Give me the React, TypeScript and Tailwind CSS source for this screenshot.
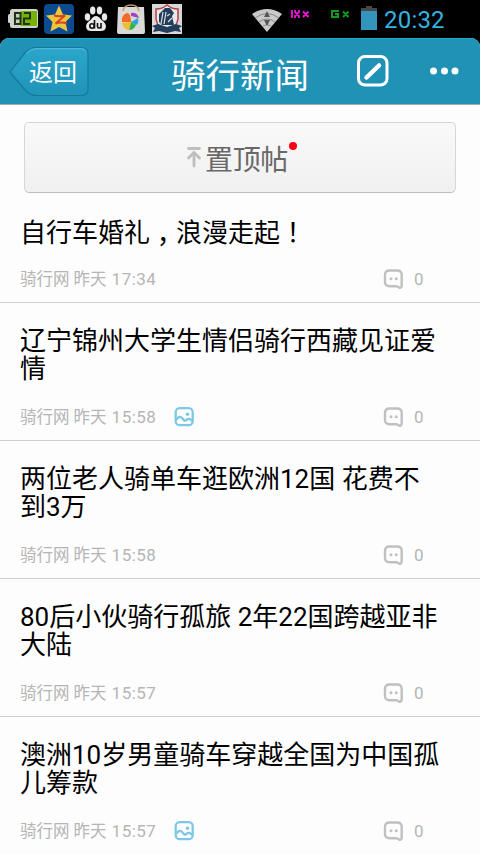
type Post = {
  title: string[];
  time: string;
  hasImage?: boolean;
  replies: number;
};

const posts: Post[] = [
  { title: ["自行车婚礼，浪漫走起！"], time: "17:34", replies: 0 },
  {
    title: ["辽宁锦州大学生情侣骑行西藏见证爱", "情"],
    time: "15:58",
    hasImage: true,
    replies: 0,
  },
  {
    title: ["两位老人骑单车逛欧洲12国 花费不", "到3万"],
    time: "15:58",
    replies: 0,
  },
  {
    title: ["80后小伙骑行孤旅 2年22国跨越亚非", "大陆"],
    time: "15:57",
    replies: 0,
  },
  {
    title: ["澳洲10岁男童骑车穿越全国为中国孤", "儿筹款"],
    time: "15:57",
    hasImage: true,
    replies: 0,
  },
];

/* ---------------- PAGE ---------------- */

export default function App() {
  return (
    <div className="h-[854px] w-[480px] overflow-hidden bg-black font-['Roboto','Noto_Sans_CJK_SC',sans-serif]">
      <StatusBar />
      <div className="flex h-[816px] flex-col overflow-hidden rounded-t-[9px] bg-[#fdfdfd]">
        <Header />

        <main className="flex flex-col">
          <div className="px-6 pt-[17px]">
            <button className="flex h-[71px] w-full items-center justify-center rounded-[5px] border border-[#d6d6d6] border-b-[#bdbdbd] bg-gradient-to-b from-[#f9f9f9] to-[#f0f0f0] pr-[6px]">
              <TopIcon />
              <span className="mt-[6px] ml-[3px] text-[28px] leading-8 tracking-[-0.3px] text-[#686868]">
                <span className="relative">
                  置顶帖
                  <span className="absolute -top-[2px] right-[-9px] size-2 rounded-full bg-[#fb0010]" />
                </span>
              </span>
            </button>
          </div>

          {posts.map((post, idx) => (
            <PostRow key={idx} post={post} />
          ))}
        </main>
      </div>
    </div>
  );
}

/* ---------------- COMPONENTS ---------------- */

function Header() {
  return (
    <header className="flex h-[67px] shrink-0 items-start border-t border-b border-t-[#1fabc6] border-b-[#a4a9aa] bg-[#1f92b5]">
      <button className="relative mt-[7px] ml-[9px] h-[52px] w-[80px]">
        <svg viewBox="0 0 80 52" className="absolute inset-0 h-full w-full">
          <defs>
            <linearGradient id="back" x1="0" y1="0" x2="0" y2="1">
              <stop offset="0" stopColor="#2ca6cc" />
              <stop offset="1" stopColor="#2094b8" />
            </linearGradient>
          </defs>
          <path
            d="M1 26 16 7Q21 1.500 27 1.500H72Q79 1.500 79 8V43Q79 49.500 72 49.500H27Q21 49.500 16 44Z"
            fill="url(#back)"
            stroke="#13799a"
            strokeWidth="1.200"
          />
          <path d="M17 7.500Q21.500 2.700 27 2.700H72Q76 2.700 77.500 5.500" fill="none" stroke="#58bad7" strokeWidth="1" />
        </svg>
        <span className="absolute top-[11px] left-5 text-[24px] leading-8 whitespace-nowrap text-white">返回</span>
      </button>
      <h1 className="mt-[14px] ml-[82px] w-[138px] text-[34.5px] leading-[46px] whitespace-nowrap text-white">骑行新闻</h1>
      <svg viewBox="0 0 32 32" className="mt-4 ml-[48px] size-8" fill="none" stroke="#fff">
        <rect x="1.500" y="1.500" width="28.500" height="28.500" rx="6.500" strokeWidth="3" />
        <path d="M9.500 22.500 22 10.500" strokeWidth="4.500" strokeLinecap="round" />
      </svg>
      <svg viewBox="0 0 30 8" className="mt-7 ml-[40px] h-2 w-[30px]" fill="#fff">
        <circle cx="4.500" cy="4" r="3.500" />
        <circle cx="15.500" cy="4" r="3.500" />
        <circle cx="26" cy="4" r="3.500" />
      </svg>
    </header>
  );
}

function PostRow({ post }: { post: Post }) {
  return (
    <article className="flex flex-col border-b border-[#cfcfcf] px-5 pt-6 pb-[13px]">
      <h2 className="text-[26px] leading-7 whitespace-nowrap text-black">
        {post.title.map((line) => (
          <span key={line} className="block h-7">
            <TitleText text={line} />
          </span>
        ))}
      </h2>
      <div className="mt-6 flex h-5 items-center text-[16.5px] leading-5 text-[#b5b5b5]">
        <span className="w-[154px] whitespace-nowrap">
          骑行网 昨天<span className="ml-[5px] text-[17px] tracking-[0.5px]">{post.time}</span>
        </span>
        <span className="h-5 w-[209px]">{post.hasImage && <ImageIcon />}</span>
        <CommentIcon />
        <span className="ml-[10px] text-[17px]">{post.replies}</span>
      </div>
    </article>
  );
}

// full-width punctuation sits in the middle of its cell
function TitleText({ text }: { text: string }) {
  return text.split(/([，！])/).map((part, i) => {
    if (part === "，") {
      return (
        <span key={i} className="relative top-[9px] font-['Noto_Sans_CJK_TC',sans-serif]">
          {part}
        </span>
      );
    }
    if (part === "！") {
      return (
        <span key={i} className="font-['Noto_Sans_CJK_TC',sans-serif]">
          {part}
        </span>
      );
    }
    return part;
  });
}

function TopIcon() {
  return (
    <svg viewBox="0 0 16 22" className="h-[22px] w-4 -translate-y-px" fill="none" stroke="#bebebe" strokeWidth="2.800" strokeLinecap="round">
      <path d="M2.500 2.500H13.500M8 7V20M2.500 12 8 6.500 13.500 12" />
    </svg>
  );
}

function CommentIcon() {
  return (
    <svg viewBox="0 0 21 20" className="h-5 w-[21px]" fill="none" stroke="#c0c0c0" strokeWidth="2.400">
      <path d="M6.500 1.500H14Q18.700 1.500 18.700 6V15.500Q18.700 19.500 16 18.500L13.800 17.300H6.500Q2 17.300 2 13V6Q2 1.500 6.500 1.500Z" strokeLinejoin="round" />
      <circle cx="8" cy="9.700" r="1.500" fill="#c0c0c0" stroke="none" />
      <circle cx="13.200" cy="9.700" r="1.500" fill="#c0c0c0" stroke="none" />
    </svg>
  );
}

function ImageIcon() {
  return (
    <svg viewBox="0 0 20 20" className="size-5" fill="none" stroke="#7cc8e6" strokeWidth="2.300">
      <rect x="1.700" y="1.200" width="17" height="17" rx="4" />
      <path d="M2.500 12.500Q6 7.500 9 12Q11 14.800 12.500 12.800Q15 10.500 18 14" />
      <circle cx="13.500" cy="7.200" r="1.800" fill="#7cc8e6" stroke="none" />
    </svg>
  );
}

/* ---------------- STATUS BAR ---------------- */

function StatusBar() {
  return (
    <div className="flex h-[38px] items-start bg-black">
      <svg viewBox="0 0 31 20" className="mt-[9px] ml-2 h-5 w-[31px]">
        <rect x="2" y="0" width="28" height="19" rx="2.500" fill="#d0d3cf" />
        <rect x="0" y="5" width="4" height="9" rx="1.500" fill="#d0d3cf" />
        <rect x="5" y="2" width="23" height="15" fill="#c8d1bd" />
        <rect x="13" y="2" width="16" height="15" fill="#75b300" />
        <path d="M7 4H12.500V15H7V4ZM7 9.500H12.500M16 4H22V9.500H16V15H22" fill="none" stroke="#23321b" strokeWidth="2" />
      </svg>
      <svg viewBox="0 0 30 30" className="mt-1 ml-[5px] size-[30px]">
        <rect width="30" height="30" rx="4" fill="#0c4b92" />
        <path d="M15 1.500 19 10.500 28 11.500 21.500 18 23.500 27.500 15 23 6.500 27.500 8.500 18 2 11.500 11 10.500Z" fill="#ecc43d" />
        <path d="M10 11.500Q15 13 21 11.500L11.500 19.500Q17 17.500 23 19.500" fill="none" stroke="#d8441d" strokeWidth="2" />
      </svg>
      <svg viewBox="0 0 24 26" className="mt-[6px] ml-[10px] h-[26px] w-6" fill="#e9e9e9">
        <ellipse cx="3.500" cy="11" rx="2.700" ry="3.700" />
        <ellipse cx="8.700" cy="4.500" rx="2.700" ry="3.900" />
        <ellipse cx="15.500" cy="4.500" rx="2.700" ry="3.900" />
        <ellipse cx="20.500" cy="11" rx="2.700" ry="3.700" />
        <path d="M12 10Q15 10 17 13.500Q22 17 22 20.500Q21.500 25.500 16 25H8Q2.500 25.500 2 20.500Q2 17 7 13.500Q9 10 12 10Z" />
        <path d="M10.500 14V22.500M13.500 17V20.500Q13.500 22 15 22Q17 22 17 20.500V17V22.500" fill="none" stroke="#111" strokeWidth="1.600" />
        <circle cx="8" cy="20" r="2.200" fill="none" stroke="#111" strokeWidth="1.600" />
      </svg>
      <svg viewBox="0 0 28 30" className="mt-1 ml-[9px] h-[30px] w-7">
        <path d="M1 3H27L28 28Q28 30 25 30H3Q0 30 0 28Z" fill="#d9dad5" />
        <path d="M6 7Q7 1 14 1Q21 1 22 7" fill="none" stroke="#c89b72" strokeWidth="1.500" />
        <path d="M14 18 5 18Q4 11 10 9Q14 9 14 18Z" fill="#f46a26" />
        <path d="M14 12 14 9Q20 8 22 14Z" fill="#a63fc0" />
        <path d="M14 18 21 14Q22 20 19 21Z" fill="#26a6d9" />
        <path d="M14 18 19 21Q17 26 12 26Z" fill="#34b34d" />
        <path d="M14 18 12 26Q7 26 5 19Z" fill="#efbd28" />
      </svg>
      <svg viewBox="0 0 30 30" className="mt-1 ml-[7px] size-[30px]">
        <path d="M0 0H30V30H0Z" fill="#d8d8d8" />
        <path d="M4 5Q10 5 15 1Q20 5 26 5V15Q25 23 15 28Q5 23 4 15Z" fill="#e8e8e8" stroke="#b53e48" strokeWidth="1.500" />
        <path d="M7 18V10L13 4H18L22 9 20 12 22 21H10Z" fill="#233e5b" />
        <path d="M9 20 11 8M12 20 14 8M15 12 18 10M16 18 20 14" stroke="#dcdfe3" strokeWidth="1.200" />
        <path d="M0 22 6 20 15 23 24 20 30 22 27 24 29 28 23 27 15 29 7 27 1 28 3 24Z" fill="#233e5b" />
      </svg>

      <svg viewBox="0 0 30 24" className="mt-[9px] ml-[70px] h-6 w-[30px]">
        <path d="M0 5Q15-5 30 5L15 23Z" fill="#c9c9c9" />
        <path d="M3 9Q15 0 27 9M7 13Q15 7 23 13M11 17Q15 14 19 17" fill="none" stroke="#8a8a8a" strokeWidth="1" />
        <path d="M12 8 15 2 18 8ZM12 11H18L15 17Z" fill="#555" />
      </svg>
      <svg viewBox="0 0 19 8" className="mt-[10px] ml-[9px] h-2 w-[19px]" fill="none" stroke="#f414df" strokeWidth="1.800">
        <path d="M1 0V8M4 0V2L8 6V8M8 0V2L4 6V8M12 1.500 17.500 7M17.500 1.500 12 7" />
      </svg>
      <svg viewBox="0 0 19 8" className="mt-[10px] ml-[21px] h-2 w-[19px]" fill="none" stroke="#139a1b" strokeWidth="2">
        <path d="M8 1H1V7H7V4H4M12 1.500 17.500 7M17.500 1.500 12 7" />
      </svg>
      <svg viewBox="0 0 16 24" className="mt-[6px] ml-[11px] h-6 w-4">
        <path d="M5 0H11V2H16V6H0V2H5Z" fill="#484848" />
        <rect y="5" width="16" height="19" fill="#3295bb" />
      </svg>
      <span className="mt-[4px] ml-[7px] text-[24px] leading-8 tracking-[0.2px] text-[#34b3e2]">20:32</span>
    </div>
  );
}
